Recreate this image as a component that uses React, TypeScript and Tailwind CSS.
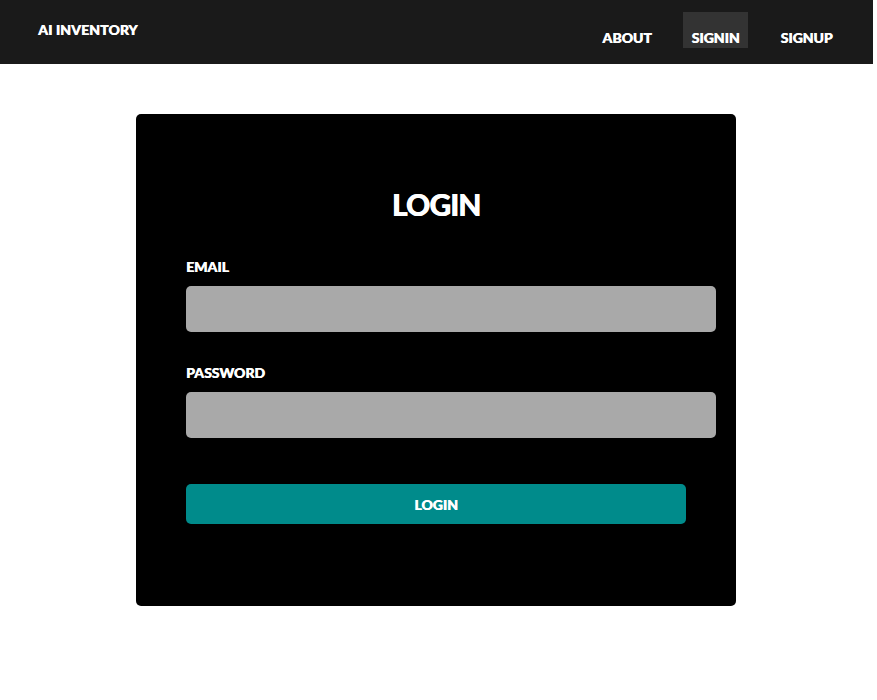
const display = "font-['Lato','Open_Sans',sans-serif] font-black text-white [text-shadow:0.5px_0_0_#fff]";

const links = [
  { name: "About", box: "w-[64px]" },
  { name: "Signin", box: "w-[65px] bg-[#333333]" },
  { name: "Signup", box: "w-[69px]" },
];

function Field({ label, type }: { label: string; type: string }) {
  return (
    <div className="mb-8">
      <label className={`${display} mb-[11px] block text-[14px] leading-[17px] uppercase`}>{label}</label>
      <input type={type} className="block h-[46px] w-[530px] rounded-[5px] bg-[#a9a9a9]" />
    </div>
  );
}

export default function App() {
  return (
    <div className="min-h-[700px] w-[873px] bg-white">
      <header className="flex h-16 items-start justify-between bg-[#1a1a1a] pl-[38px] pr-8">
        <a className={`${display} mt-[21px] text-[14px] leading-[18px] uppercase tracking-[0.1px]`}>AI Inventory</a>
        <nav className="mt-3 flex gap-6">
          {links.map((link) => (
            <a
              key={link.name}
              className={`${display} flex h-9 items-end justify-center pb-px text-[14px] leading-[18px] uppercase ${link.box}`}
            >
              {link.name}
            </a>
          ))}
        </nav>
      </header>

      <main className="ml-[136px] mt-[50px] h-[492px] w-[600px] rounded-[5px] bg-black pl-[50px] pt-[70px]">
        <h1 className={`${display} mb-[34px] w-[500px] text-center text-[30px] leading-[40px] uppercase tracking-[-1px]`}>Login</h1>
        <Field label="Email" type="email" />
        <Field label="Password" type="password" />
        <button className={`${display} mt-[46px] block h-10 w-[500px] rounded-[5px] bg-[#008b8b] text-center text-[14px] uppercase`}>
          Login
        </button>
      </main>
    </div>
  );
}
